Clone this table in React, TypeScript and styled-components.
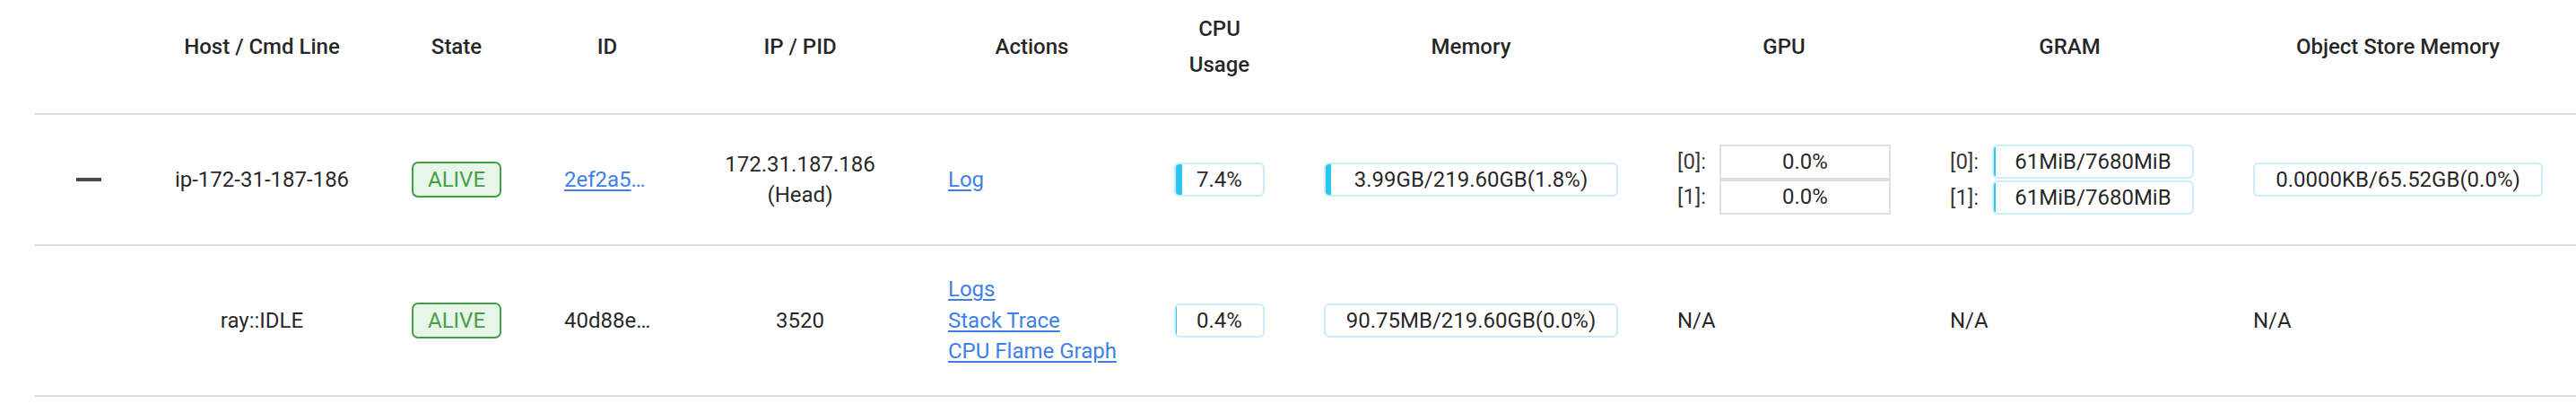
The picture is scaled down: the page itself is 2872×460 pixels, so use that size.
import React from 'react';
import styled, { createGlobalStyle } from 'styled-components';

const GlobalStyle = createGlobalStyle`
  html, body { margin: 0; padding: 0; background: #ffffff; }
  body {
    font-family: Roboto, "Noto Sans", "Liberation Sans", sans-serif;
    color: rgba(0, 0, 0, 0.87);
  }
`;

const COLS = '122px 264px 170px 166px 264px 253px 165px 396px 302px 335px 1fr';

const Table = styled.div`
  margin-left: 38px;
  display: flex;
  flex-direction: column;
`;

const Row = styled.div<{ $h: number; $padBottom?: number }>`
  display: grid;
  grid-template-columns: ${COLS};
  align-items: center;
  height: ${(p) => p.$h}px;
  padding-bottom: ${(p) => p.$padBottom ?? 0}px;
  border-bottom: 2px solid #e0e0e0;
`;

const HeaderCell = styled.div`
  font-size: 24px;
  font-weight: 500;
  line-height: 40px;
  text-align: center;
  padding: 0 28px;
  color: rgba(0, 0, 0, 0.87);
`;

const Cell = styled.div<{ $align?: 'center' | 'left'; $pl?: number }>`
  display: flex;
  flex-direction: column;
  align-items: ${(p) => (p.$align === 'left' ? 'flex-start' : 'center')};
  justify-content: center;
  padding-left: ${(p) => p.$pl ?? 0}px;
  font-size: 24px;
  line-height: 34.5px;
  text-align: center;
  color: rgba(0, 0, 0, 0.87);
`;

const CollapseIcon = styled.svg`
  width: 48px;
  height: 48px;
  fill: #4a4a4a;
  display: block;
`;

const Badge = styled.span`
  display: inline-flex;
  align-items: center;
  height: 40px;
  box-sizing: border-box;
  padding: 0 16px;
  border: 2px solid #43a047;
  border-radius: 7px;
  background: #e8f5e9;
  color: #43a047;
  font-size: 24px;
`;

const IdLink = styled.span`
  color: #3f7fe8;
  white-space: nowrap;
`;

const Underlined = styled.a`
  color: inherit;
  text-decoration: underline;
  text-underline-offset: 3px;
  cursor: pointer;
`;

const ActionLink = styled.a`
  color: #3f7fe8;
  text-decoration: underline;
  text-underline-offset: 3px;
  cursor: pointer;
  white-space: nowrap;
`;

const BarBox = styled.div<{ $w: number }>`
  position: relative;
  width: ${(p) => p.$w}px;
  height: 38px;
  box-sizing: border-box;
  border: 2px solid #caecfb;
  border-radius: 6px;
  background: #ffffff;
  overflow: hidden;
  display: flex;
  align-items: center;
  justify-content: center;
`;

const BarFill = styled.div`
  position: absolute;
  left: 0;
  top: 0;
  bottom: 0;
  background: #2bc5f2;
`;

const BarText = styled.span`
  position: relative;
  font-size: 24px;
  line-height: 1;
  color: rgba(0, 0, 0, 0.87);
  white-space: nowrap;
`;

const MultiList = styled.div<{ $gap: number }>`
  display: flex;
  flex-direction: column;
  gap: ${(p) => p.$gap}px;
`;

const MultiRow = styled.div`
  display: flex;
  align-items: center;
  gap: 17px;
`;

const Label = styled.span`
  font-size: 24px;
  color: rgba(0, 0, 0, 0.8);
  width: 30px;
`;

const GreyBox = styled.div<{ $w: number }>`
  width: ${(p) => p.$w}px;
  height: 39px;
  box-sizing: border-box;
  border: 2px solid #e0e0e0;
  display: flex;
  align-items: center;
  justify-content: center;
  font-size: 24px;
`;

const Bar: React.FC<{ width: number; percent: number; text: string }> = ({ width, percent, text }) => (
  <BarBox $w={width}>
    <BarFill style={{ width: `${percent}%` }} />
    <BarText>{text}</BarText>
  </BarBox>
);

const headers = [
  '',
  'Host / Cmd Line',
  'State',
  'ID',
  'IP / PID',
  'Actions',
  'CPU Usage',
  'Memory',
  'GPU',
  'GRAM',
  'Object Store Memory',
];

export default function App() {
  return (
    <>
      <GlobalStyle />
      <Table>
        <Row $h={104} $padBottom={22}>
          {headers.map((h, i) => (
            <HeaderCell key={i}>{h}</HeaderCell>
          ))}
        </Row>

        <Row $h={144}>
          <Cell>
            <CollapseIcon viewBox="0 0 24 24">
              <path d="M19 13H5v-2h14v2z" />
            </CollapseIcon>
          </Cell>
          <Cell>ip-172-31-187-186</Cell>
          <Cell>
            <Badge>ALIVE</Badge>
          </Cell>
          <Cell $align="left" $pl={35}>
            <IdLink>
              <Underlined>2ef2a5</Underlined>…
            </IdLink>
          </Cell>
          <Cell>
            <span>172.31.187.186</span>
            <span>(Head)</span>
          </Cell>
          <Cell $align="left" $pl={33}>
            <ActionLink>Log</ActionLink>
          </Cell>
          <Cell>
            <Bar width={101} percent={7.4} text="7.4%" />
          </Cell>
          <Cell>
            <Bar width={328} percent={1.8} text="3.99GB/219.60GB(1.8%)" />
          </Cell>
          <Cell $align="left" $pl={32}>
            <MultiList $gap={-1}>
              {['0', '1'].map((k) => (
                <MultiRow key={k}>
                  <Label>[{k}]:</Label>
                  <GreyBox $w={191}>0.0%</GreyBox>
                </MultiRow>
              ))}
            </MultiList>
          </Cell>
          <Cell $align="left" $pl={34}>
            <MultiList $gap={2}>
              {['0', '1'].map((k) => (
                <MultiRow key={k}>
                  <Label>[{k}]:</Label>
                  <Bar width={225} percent={0.8} text="61MiB/7680MiB" />
                </MultiRow>
              ))}
            </MultiList>
          </Cell>
          <Cell $align="left" $pl={37}>
            <Bar width={323} percent={0} text="0.0000KB/65.52GB(0.0%)" />
          </Cell>
        </Row>

        <Row $h={166}>
          <Cell />
          <Cell>ray::IDLE</Cell>
          <Cell>
            <Badge>ALIVE</Badge>
          </Cell>
          <Cell $align="left" $pl={35}>
            <span>40d88e…</span>
          </Cell>
          <Cell>3520</Cell>
          <Cell $align="left" $pl={33}>
            <ActionLink>Logs</ActionLink>
            <ActionLink>Stack Trace</ActionLink>
            <ActionLink>CPU Flame Graph</ActionLink>
          </Cell>
          <Cell>
            <Bar width={101} percent={0.4} text="0.4%" />
          </Cell>
          <Cell>
            <Bar width={328} percent={0} text="90.75MB/219.60GB(0.0%)" />
          </Cell>
          <Cell $align="left" $pl={32}>N/A</Cell>
          <Cell $align="left" $pl={34}>N/A</Cell>
          <Cell $align="left" $pl={37}>N/A</Cell>
        </Row>
      </Table>
    </>
  );
}
